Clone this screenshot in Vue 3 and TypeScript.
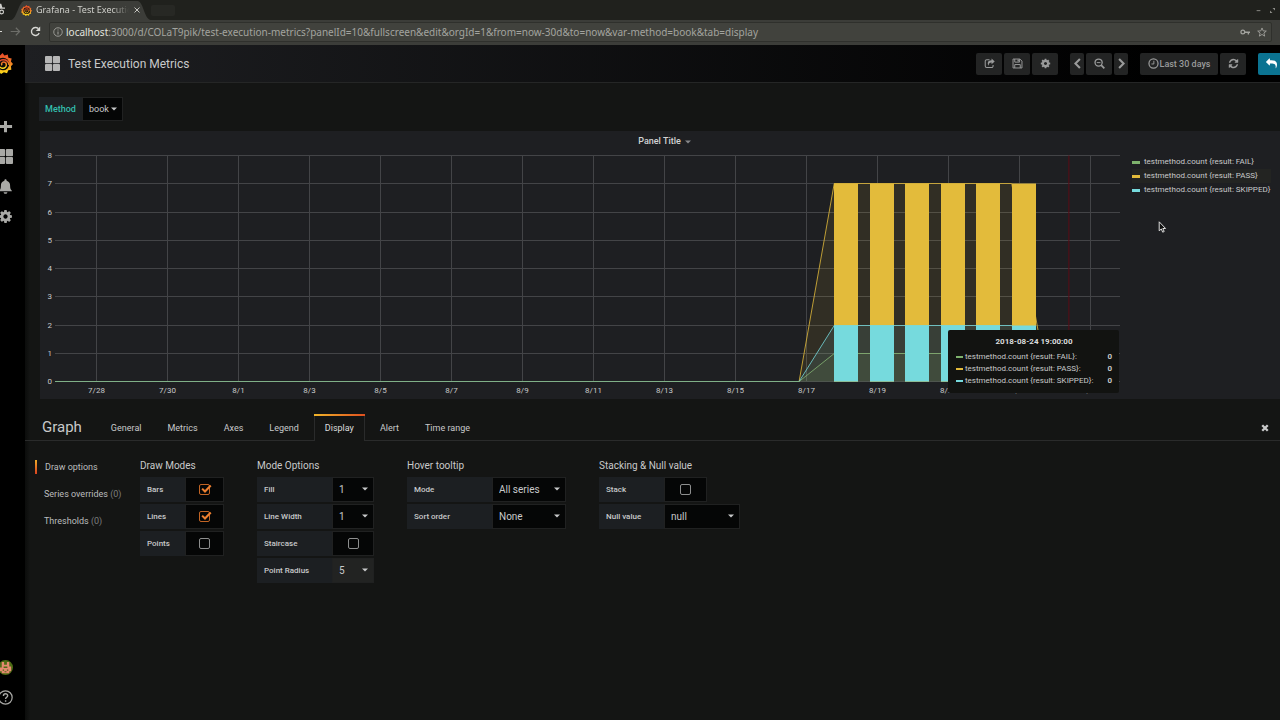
<script setup lang="ts">
import { computed, onBeforeUnmount, onMounted, ref } from 'vue'

interface Series {
  name: string
  color: string
  value: number
}

const series: Series[] = [
  { name: 'testmethod.count {result: FAIL}', color: '#7eb26d', value: 1 },
  { name: 'testmethod.count {result: PASS}', color: '#e3bb3b', value: 7 },
  { name: 'testmethod.count {result: SKIPPED}', color: '#76dadd', value: 2 },
]

const chartEl = ref<HTMLElement | null>(null)
const width = ref(1080)
const left = 15
const top = 5
const plotHeight = 226
const maxY = 8
const days = 30

const x = (day: number): number => left + (day / days) * (width.value - left)
const y = (value: number): number => Math.round(top + plotHeight * (1 - value / maxY)) + 0.5

const dateLabels = ['7/28', '7/30', '8/1', '8/3', '8/5', '8/7', '8/9', '8/11', '8/13', '8/15', '8/17', '8/19', '8/21', '8/23', '8/25']
const xTicks = computed(() =>
  dateLabels.map((label, i) => ({ label, x: Math.round(x(1.15 + i * 2)) + 0.5 })),
)
const yTicks = computed(() => Array.from({ length: maxY + 1 }, (_, v) => ({ label: String(v), y: y(v) })))

const rise = 20.96
const first = 21.95
const shapes = computed(() =>
  series.map((s) => {
    const zero = y(0)
    const v = y(s.value)
    const line = `M${left} ${zero}H${x(rise)}L${x(first)} ${v}H${x(first + 5)}L${x(first + 6)} ${zero}`
    return {
      ...s,
      line,
      area: `${line}Z`,
      bars: [0, 1, 2, 3, 4, 5].map((i) => ({
        x: Math.round(x(first + i)),
        w: Math.round(x(0.67) - x(0)),
        y: v,
        h: zero - v,
      })),
    }
  }),
)

let observer: ResizeObserver | undefined
onMounted(() => {
  if (!chartEl.value) return
  width.value = chartEl.value.clientWidth
  observer = new ResizeObserver(() => {
    if (chartEl.value) width.value = chartEl.value.clientWidth
  })
  observer.observe(chartEl.value)
})
onBeforeUnmount(() => observer?.disconnect())

const tabs = ['General', 'Metrics', 'Axes', 'Legend', 'Display', 'Alert', 'Time range']
const activeTab = ref('Display')
const sections = [
  { label: 'Draw options', count: '' },
  { label: 'Series overrides', count: '(0)' },
  { label: 'Thresholds', count: '(0)' },
]
const activeSection = ref('Draw options')

interface Field {
  id: string
  label: string
  kind: 'check' | 'select'
  checked?: boolean
  value?: string
  lit?: boolean
}
interface Group {
  title: string
  cls: string
  fields: Field[]
}
const groups = ref<Group[]>([
  {
    title: 'Draw Modes',
    cls: 'g-draw',
    fields: [
      { id: 'bars', label: 'Bars', kind: 'check', checked: true },
      { id: 'lines', label: 'Lines', kind: 'check', checked: true },
      { id: 'points', label: 'Points', kind: 'check', checked: false },
    ],
  },
  {
    title: 'Mode Options',
    cls: 'g-mode',
    fields: [
      { id: 'fill', label: 'Fill', kind: 'select', value: '1' },
      { id: 'line-width', label: 'Line Width', kind: 'select', value: '1' },
      { id: 'staircase', label: 'Staircase', kind: 'check', checked: false },
      { id: 'radius', label: 'Point Radius', kind: 'select', value: '5', lit: true },
    ],
  },
  {
    title: 'Hover tooltip',
    cls: 'g-hover',
    fields: [
      { id: 'tip-mode', label: 'Mode', kind: 'select', value: 'All series' },
      { id: 'sort', label: 'Sort order', kind: 'select', value: 'None' },
    ],
  },
  {
    title: 'Stacking & Null value',
    cls: 'g-stack',
    fields: [
      { id: 'stack', label: 'Stack', kind: 'check', checked: false },
      { id: 'null', label: 'Null value', kind: 'select', value: 'null' },
    ],
  },
])
const url = ref('/d/COLaT9pik/test-execution-metrics?panelId=10&fullscreen&edit&orgId=1&from=now-30d&to=now&var-method=book&tab=display')
const method = ref('book')
</script>

<template>
  <div class="page">
    <svg class="sprite" width="0" height="0" aria-hidden="true">
      <defs>
        <linearGradient id="flame" x1="0" y1="0" x2="0" y2="1">
          <stop offset="0" stop-color="#e8442b" />
          <stop offset="0.55" stop-color="#f08a24" />
          <stop offset="1" stop-color="#ffe318" />
        </linearGradient>
      </defs>
      <symbol id="i-grafana" viewBox="0 0 24 24">
        <path fill="url(#flame)" d="M12 0l2.200 2.800 3.800-1 .7 3.500 3.800 1-.9 3.500 2.400 2.700-2.300 2.500.4 4-3.500.7-1.400 3.500-3.600-1.200L10.300 24 8 21.200l-4 .3-.6-3.700L.3 15.600l1.500-3.300L.4 8.800l3.400-1.500.6-3.700 3.800.3z" />
        <circle cx="12.500" cy="12.500" r="7.200" fill="#0b0b0b" />
        <path d="M19.500 13.500C19 9.500 16 7.600 12.700 7.600a5 5 0 0 0-5 5 4.700 4.700 0 0 0 4.700 4.700 4 4 0 0 0 4-4 3.200 3.200 0 0 0-3.200-3.100 2.300 2.300 0 0 0-1.600 3.900" fill="none" stroke="url(#flame)" stroke-width="1.700" />
      </symbol>
      <symbol id="i-grid" viewBox="0 0 16 16">
        <rect width="7.600" height="7.600" rx="1" /><rect x="8.400" width="7.600" height="7.600" rx="1" />
        <rect y="8.400" width="7.600" height="7.600" rx="1" /><rect x="8.400" y="8.400" width="7.600" height="7.600" rx="1" />
      </symbol>
      <symbol id="i-plus" viewBox="0 0 16 16"><path d="M6.400 2h3.200v4.400H15v3.200H9.600V14H6.400V9.600H1V6.400h5.400z" /></symbol>
      <symbol id="i-bell" viewBox="0 0 16 16"><path d="M8 .3c.7 0 1.200.5 1.200 1.200v.4c2.400.6 3.700 2.600 3.700 5.100 0 3 .5 4.200 1.900 5.500v.6H1.200v-.6C2.600 11.200 3.100 10 3.100 7c0-2.500 1.300-4.500 3.700-5.100v-.4C6.800.8 7.300.3 8 .3zM6 14h4c-.1 1.100-.9 1.800-2 1.800S6.100 15.100 6 14z" /></symbol>
      <symbol id="i-cog" viewBox="0 0 1792 1792"><path d="M1152 896q0-106-75-181t-181-75-181 75-75 181 75 181 181 75 181-75 75-181zm512-109v222q0 12-8 23t-20 13l-185 28q-19 54-39 91 35 50 107 138 10 12 10 25t-9 23q-27 37-99 108t-94 71q-12 0-26-9l-138-108q-44 23-91 38-16 136-29 186-7 28-36 28h-222q-14 0-24.500-8.500t-11.500-21.500l-28-184q-49-16-90-37l-141 107q-10 9-25 9-14 0-25-11-126-114-165-168-7-10-7-23 0-12 8-23 15-21 51-66.500t54-70.500q-27-50-41-99l-183-27q-13-2-21-12.500t-8-23.500v-222q0-12 8-23t19-13l186-28q14-46 39-92-40-57-107-138-10-12-10-24 0-10 9-23 26-36 98.500-107.500t94.500-71.500q13 0 26 10l138 107q44-23 91-38 16-136 29-186 7-28 36-28h222q14 0 24.500 8.500t11.500 21.500l28 184q49 16 90 37l142-107q9-9 24-9 13 0 25 10 129 119 165 170 7 8 7 22 0 12-8 23-15 21-51 66.500t-54 70.500q26 50 41 98l183 28q13 2 21 12.500t8 23.500z" /></symbol>
      <symbol id="i-refresh" viewBox="0 0 1792 1792"><path d="M1639 1056q0 5-1 7-64 268-268 434.500t-478 166.500q-146 0-282.500-55t-243.500-157l-129 129q-19 19-45 19t-45-19-19-45v-448q0-26 19-45t45-19h448q26 0 45 19t19 45-19 45l-137 137q71 66 161 102t187 36q134 0 250-65t186-179q11-17 53-117 8-23 30-23h192q13 0 22.500 9.500t9.500 22.500zm25-800v448q0 26-19 45t-45 19h-448q-26 0-45-19t-19-45 19-45l138-138q-148-137-349-137-134 0-250 65t-186 179q-11 17-53 117-8 23-30 23h-199q-13 0-22.500-9.500t-9.500-22.500v-7q65-268 270-434.500t480-166.500q146 0 284 55.500t245 156.500l130-129q19-19 45-19t45 19 19 45z" /></symbol>
      <symbol id="i-reply" viewBox="0 0 1792 1792"><path d="M1792 1120q0 166-127 451-3 7-10.500 24t-13.500 30-13 22q-12 17-28 17-15 0-23.500-10t-8.500-25q0-9 2.500-26.500t2.500-23.500q5-68 5-123 0-101-17.500-181t-48.500-138.500-80-101-105.500-69.500-133-42.500-154-21.500-175.500-6h-224v256q0 26-19 45t-45 19-45-19l-512-512q-19-19-19-45t19-45l512-512q19-19 45-19t45 19 19 45v256h224q713 0 875 403 53 134 53 333z" /></symbol>
      <symbol id="i-share" viewBox="0 0 16 16">
        <path d="M8 2.500H4A2.200 2.200 0 0 0 1.800 4.700v7A2.200 2.200 0 0 0 4 13.900h7a2.200 2.200 0 0 0 2.200-2.200V10" fill="none" stroke="currentColor" stroke-width="1.500" />
        <path d="M11 .8l4.600 4.200L11 9.200V6.700C8.300 6.600 7 7.600 6.800 11.200 4.200 7.500 5.500 3.500 11 3.300z" />
      </symbol>
      <symbol id="i-save" viewBox="0 0 16 16">
        <path d="M1.500 1.500h10l3 3v10h-13zM4 1.500V6h7V1.500M4 14.500v-5h8v5" fill="none" stroke="currentColor" stroke-width="1.400" /><path d="M8 2h2v3H8z" />
      </symbol>
      <symbol id="i-left" viewBox="0 0 16 16"><path d="M11.500 1.500L5 8l6.500 6.500" fill="none" stroke="currentColor" stroke-width="3" /></symbol>
      <symbol id="i-right" viewBox="0 0 16 16"><path d="M4.500 1.500L11 8l-6.500 6.500" fill="none" stroke="currentColor" stroke-width="3" /></symbol>
      <symbol id="i-zoom" viewBox="0 0 16 16"><path d="M10.500 10.500L15 15" stroke="currentColor" stroke-width="2.600" /><circle cx="6.700" cy="6.700" r="5.200" fill="none" stroke="currentColor" stroke-width="1.900" /><path d="M4 6h5.400v1.400H4z" /></symbol>
      <symbol id="i-clock" viewBox="0 0 16 16"><path d="M8.500 4v4.700H5" fill="none" stroke="currentColor" stroke-width="1.400" /><circle cx="8" cy="8" r="6.600" fill="none" stroke="currentColor" stroke-width="1.800" /></symbol>
      <symbol id="i-help" viewBox="0 0 16 16"><circle cx="8" cy="8" r="7.100" fill="none" stroke="currentColor" stroke-width="1.300" /><path d="M5.800 6.300c0-3 4.500-2.900 4.500-.2 0 1.700-2.200 1.700-2.200 3.500M8.100 11v1.500" fill="none" stroke="currentColor" stroke-width="1.500" /></symbol>
      <symbol id="i-reload" viewBox="0 0 16 16"><path d="M13.300 10.200A5.800 5.800 0 1 1 12 3.800" fill="none" stroke="currentColor" stroke-width="2" /><path d="M14.800.8v6.400H8.400z" /></symbol>
      <symbol id="i-arrow" viewBox="0 0 16 16"><path d="M1 8h13M8.500 2.500L14 8l-5.500 5.500" fill="none" stroke="currentColor" stroke-width="1.700" /></symbol>
      <symbol id="i-info" viewBox="0 0 16 16"><circle cx="8" cy="8" r="6.800" fill="none" stroke="currentColor" stroke-width="1.400" /><path d="M7.200 7h1.600v5H7.200zM7.200 4h1.600v1.700H7.200z" /></symbol>
      <symbol id="i-key" viewBox="0 0 16 16"><circle cx="4.500" cy="8" r="3" fill="none" stroke="currentColor" stroke-width="2" /><path d="M7 7h9v2.500h-1.500V12h-2.200V9.500H7z" /></symbol>
      <symbol id="i-star" viewBox="0 0 16 16"><path d="M8 1.500l1.900 4.700 5 .3-3.900 3.200 1.300 4.900L8 11.900l-4.300 2.700L5 9.700 1.100 6.500l5-.3z" fill="none" stroke="currentColor" stroke-width="1.400" /></symbol>
      <symbol id="i-cross" viewBox="0 0 16 16"><path d="M3 3l10 10M13 3L3 13" fill="none" stroke="currentColor" stroke-width="2" /></symbol>
      <symbol id="i-close" viewBox="0 0 16 16"><path d="M2.500 2.500l11 11M13.500 2.500l-11 11" fill="none" stroke="currentColor" stroke-width="4.600" /></symbol>
      <symbol id="i-caret" viewBox="0 0 10 6"><path d="M0 .5h10L5 5.700z" /></symbol>
      <symbol id="i-tick" viewBox="0 0 16 16"><path d="M3.500 7.500l3.800 3.800 7.700-8" fill="none" stroke="currentColor" stroke-width="2.800" /></symbol>
      <symbol id="i-incognito" viewBox="0 0 16 16"><path d="M5 1h6l1.500 5H16v1.500H0V6h3.500z" /><circle cx="4.500" cy="12" r="2.500" fill="none" stroke="currentColor" stroke-width="1.500" /><circle cx="11.500" cy="12" r="2.500" fill="none" stroke="currentColor" stroke-width="1.500" /><path d="M7 11h2v1H7z" /></symbol>
    </svg>

    <div class="tabstrip">
      <svg class="incognito"><use href="#i-incognito" /></svg>
      <div class="browser-tab">
        <svg class="tab-shape" viewBox="0 0 140 20" preserveAspectRatio="none" aria-hidden="true"><path d="M0 20C6 19 7 3 13 1h114c6 2 6 18 13 19z" fill="#3c3d39" /></svg>
        <svg class="favicon"><use href="#i-grafana" /></svg>
        <span class="tab-title">Grafana - Test Execution</span>
        <button class="tab-close" aria-label="Close tab"><svg><use href="#i-cross" /></svg></button>
      </div>
      <div class="new-tab"></div>
      <div class="window-buttons">
        <button aria-label="Minimize"><svg viewBox="0 0 8 8"><path d="M1 3.500h6v1.500H1z" /></svg></button>
        <button aria-label="Restore"><svg viewBox="0 0 8 8"><path d="M4 0h4v4zM0 4l4 4H0z" /></svg></button>
      </div>
    </div>

    <div class="toolbar">
      <button class="tool back" aria-label="Back"><svg viewBox="0 0 4 12"><path d="M0 5h4v2H0z" /></svg></button>
      <button class="tool forward" aria-label="Forward"><svg><use href="#i-arrow" /></svg></button>
      <button class="tool" aria-label="Reload"><svg><use href="#i-reload" /></svg></button>
      <div class="address">
        <svg class="info"><use href="#i-info" /></svg>
        <label class="url" for="url"><b>localhost</b>:3000</label>
        <input id="url" v-model="url" class="url-input" type="text" spellcheck="false" />
        <svg class="key"><use href="#i-key" /></svg>
        <svg class="star"><use href="#i-star" /></svg>
      </div>
    </div>

    <div class="app">
      <nav class="sidebar">
        <a href="#" class="brand" aria-label="Home"><svg><use href="#i-grafana" /></svg></a>
        <a href="#" aria-label="Create"><svg><use href="#i-plus" /></svg></a>
        <a href="#" aria-label="Dashboards"><svg><use href="#i-grid" /></svg></a>
        <a href="#" aria-label="Alerting"><svg><use href="#i-bell" /></svg></a>
        <a href="#" aria-label="Configuration"><svg><use href="#i-cog" /></svg></a>
        <a href="#" class="user" aria-label="Profile">
          <svg viewBox="0 0 16 16">
            <circle cx="8" cy="8" r="8" fill="#4d6b14" />
            <path fill="#e58a70" d="M4 2h2.500v3h3V2H12v5h2v5h-2v2H4v-2H1V8h3z" />
            <path fill="#4d6b14" d="M6 7h4v1.500H6zM5 10h1.500v1.500H5zM9.500 10H11v1.500H9.500zM7 12h2v1H7z" />
          </svg>
        </a>
        <a href="#" aria-label="Help"><svg><use href="#i-help" /></svg></a>
      </nav>

      <main class="content">
        <header class="navbar">
          <h1><svg><use href="#i-grid" /></svg>Test Execution Metrics</h1>
          <div class="nav-group">
            <button class="nb" aria-label="Share"><svg><use href="#i-share" /></svg></button>
            <button class="nb" aria-label="Save"><svg><use href="#i-save" /></svg></button>
            <button class="nb" aria-label="Settings"><svg><use href="#i-cog" /></svg></button>
          </div>
          <div class="nav-group">
            <button class="nb narrow" aria-label="Earlier"><svg><use href="#i-left" /></svg></button>
            <button class="nb" aria-label="Zoom out"><svg><use href="#i-zoom" /></svg></button>
            <button class="nb narrow" aria-label="Later"><svg><use href="#i-right" /></svg></button>
          </div>
          <div class="nav-group">
            <button class="nb time"><svg><use href="#i-clock" /></svg>Last 30 days</button>
            <button class="nb" aria-label="Refresh"><svg><use href="#i-refresh" /></svg></button>
          </div>
          <div class="nav-group">
            <button class="nb return" aria-label="Back to dashboard"><svg><use href="#i-reply" /></svg></button>
          </div>
        </header>

        <div class="variables">
          <label for="method">Method</label>
          <span class="var-wrap">
            <select id="method" v-model="method"><option>book</option></select>
            <svg class="caret"><use href="#i-caret" /></svg>
          </span>
        </div>

        <section class="panel">
          <button class="panel-title">Panel Title<svg class="caret"><use href="#i-caret" /></svg></button>
          <div class="panel-body">
            <div ref="chartEl" class="chart">
              <svg class="plot" role="img" aria-label="Test results per day">
                <g class="grid">
                  <line v-for="t in yTicks" :key="'y' + t.label" :x1="left" :x2="width" :y1="t.y" :y2="t.y" />
                  <line v-for="t in xTicks" :key="'x' + t.label" :x1="t.x" :x2="t.x" :y1="y(8)" :y2="y(0)" />
                </g>
                <g v-for="s in shapes" :key="s.name">
                  <path :d="s.area" :fill="s.color" fill-opacity="0.1" />
                  <path :d="s.line" :stroke="s.color" stroke-opacity="0.8" fill="none" />
                  <rect v-for="b in s.bars" :key="b.x" :x="b.x" :y="b.y" :width="b.w" :height="b.h" :fill="s.color" />
                </g>
                <line class="baseline" :x1="left" :x2="x(rise)" :y1="y(0)" :y2="y(0)" />
                <line class="crosshair" :x1="x(28.56)" :x2="x(28.56)" :y1="y(8)" :y2="y(0)" />
                <g class="axis">
                  <text v-for="t in yTicks" :key="t.label" x="12" :y="t.y + 2" text-anchor="end">{{ t.label }}</text>
                  <text v-for="t in xTicks" :key="t.label" :x="t.x" :y="y(0) + 11" text-anchor="middle">{{ t.label }}</text>
                </g>
              </svg>
              <div class="tooltip">
                <div class="tip-time">2018-08-24 19:00:00</div>
                <div v-for="s in series" :key="s.name" class="tip-row">
                  <i :style="{ background: s.color }"></i><span>{{ s.name }}:</span><b>0</b>
                </div>
              </div>
            </div>
            <div class="legend">
              <button v-for="(s, i) in series" :key="s.name" :class="{ hovered: i === 1 }">
                <i :style="{ background: s.color }"></i>{{ s.name }}
              </button>
              <svg class="pointer" viewBox="0 0 8 12" aria-hidden="true"><path d="M.7.8v9l2.100-1.800 1.400 3.200 1.500-.7-1.400-3h2.800z" fill="#111" stroke="#ddd" /></svg>
            </div>
          </div>
        </section>

        <section class="editor">
          <div class="tabs">
            <h2>Graph</h2>
            <button v-for="t in tabs" :key="t" :class="{ active: t === activeTab }" @click="activeTab = t">{{ t }}</button>
            <button class="close" aria-label="Close editor"><svg><use href="#i-close" /></svg></button>
          </div>
          <div class="editor-body">
            <aside>
              <a v-for="s in sections" :key="s.label" href="#" :class="{ active: s.label === activeSection }" @click.prevent="activeSection = s.label">
                {{ s.label }} <span v-if="s.count">{{ s.count }}</span>
              </a>
            </aside>
            <div v-for="g in groups" :key="g.title" class="group" :class="g.cls">
              <h3>{{ g.title }}</h3>
              <div v-for="f in g.fields" :key="f.id" class="field" :class="f.kind">
                <label :for="f.id">{{ f.label }}</label>
                <div class="control" :class="{ lit: f.lit }">
                  <template v-if="f.kind === 'check'">
                    <span class="box">
                      <input :id="f.id" v-model="f.checked" type="checkbox" />
                      <svg v-if="f.checked"><use href="#i-tick" /></svg>
                    </span>
                  </template>
                  <template v-else>
                    <select :id="f.id" v-model="f.value"><option>{{ f.value }}</option></select>
                    <svg class="caret"><use href="#i-caret" /></svg>
                  </template>
                </div>
              </div>
            </div>
          </div>
        </section>
      </main>
    </div>
  </div>
</template>

<style>
body {
  background: #141514;
}
</style>

<style scoped>
* {
  box-sizing: border-box;
}
.page {
  min-height: 100vh;
  display: flex;
  flex-direction: column;
  overflow: hidden;
  color: #c8c9ca;
  font: 9px/14px Roboto, sans-serif;
}
.sprite {
  position: absolute;
}
button,
select,
input {
  font: inherit;
  color: inherit;
  border: 0;
  margin: 0;
  padding: 0;
  background: none;
  border-radius: 0;
}
svg {
  fill: currentColor;
  display: block;
  flex: none;
}
a {
  color: inherit;
  text-decoration: none;
}

.tabstrip {
  height: 20px;
  display: flex;
  align-items: flex-end;
  background: #20211d;
  font: 9px/14px "Noto Sans", sans-serif;
}
.incognito {
  width: 12px;
  height: 12px;
  margin: 0 0 5px -7px;
  color: #d0d0cc;
}
.browser-tab {
  position: relative;
  width: 140px;
  height: 20px;
  margin-left: 6px;
  padding: 0 10px;
  display: flex;
  align-items: center;
}
.tab-shape {
  position: absolute;
  inset: 0;
  width: 100%;
  height: 100%;
}
.favicon {
  position: relative;
  width: 11px;
  height: 11px;
}
.tab-title {
  position: relative;
  flex: 1;
  margin: 0 4px;
  overflow: hidden;
  white-space: nowrap;
  color: #cfcfca;
  mask-image: linear-gradient(90deg, #000 82%, transparent);
}
.tab-close {
  position: relative;
  color: #c5c5c0;
}
.tab-close svg {
  width: 8px;
  height: 8px;
}
.new-tab {
  width: 24px;
  height: 11px;
  margin: 0 0 4px 0;
  background: #272824;
  border-radius: 2px;
}
.window-buttons {
  margin-left: auto;
  display: flex;
  gap: 9px;
  padding: 0 5px 7px 0;
  color: #8d8d88;
}
.window-buttons svg {
  width: 5px;
  height: 5px;
}

.toolbar {
  height: 25px;
  display: flex;
  align-items: center;
  padding: 0 8px 2px 0;
  background: #3c3d39;
  color: #d8d8d4;
}
.tool {
  width: 20px;
  margin-right: 2px;
}
.tool svg {
  width: 11px;
  height: 11px;
}
.tool.back {
  width: 10px;
  margin-right: 0;
}
.tool.back svg {
  width: 2px;
}
.tool.forward {
  color: #6d6e69;
  width: 18px;
}
.address {
  flex: 1;
  height: 20px;
  display: flex;
  align-items: center;
  padding: 0 4px 0 3px;
  margin-left: -3px;
  border: 1px solid #2f302c;
  border-radius: 2px;
  background: #41423d;
  color: #a3a49f;
  font: 10px/16px "Noto Sans", sans-serif;
}
.address svg {
  width: 10px;
  height: 10px;
}
.address .url {
  margin-left: 3px;
}
.url b {
  font-weight: 400;
  color: #e2e2de;
}
.url-input {
  flex: 1;
  min-width: 0;
}
.address .star {
  margin-left: 7px;
}

.app {
  flex: 1;
  display: flex;
}
.sidebar {
  width: 25px;
  flex: none;
  display: flex;
  flex-direction: column;
  overflow: hidden;
  padding: 7px 0 15px;
  background: #000;
  color: #a9a9a6;
}
.sidebar a {
  height: 30px;
  display: flex;
  align-items: center;
  margin-left: -2px;
}
.sidebar svg {
  width: 15px;
  height: 15px;
}
.sidebar .brand {
  height: 22px;
  margin: 0 0 37px -8px;
}
.sidebar .brand svg {
  width: 21px;
  height: 21px;
}
.sidebar .user {
  margin-top: auto;
}
.sidebar a:last-child {
  height: 16px;
  margin-top: 7px;
}
.content {
  flex: 1;
  min-width: 0;
  display: flex;
  flex-direction: column;
  background: linear-gradient(90deg, #0b0c0b, transparent 5px), #141514;
}
.navbar {
  height: 38px;
  display: flex;
  align-items: center;
  padding-left: 20px;
  background: linear-gradient(90deg, #1e1f22, #000 90%);
  border-bottom: 1px solid #252626;
}
h1,
h2,
h3 {
  margin: 0;
  font-weight: 400;
}
h1 {
  flex: 1;
  display: flex;
  align-items: center;
  gap: 8px;
  font-size: 12px;
  line-height: 18px;
}
h1 svg {
  width: 15px;
  height: 15px;
  color: #b6b6b6;
}
.nav-group {
  display: flex;
  gap: 2px;
  margin-left: 12px;
}
.nb {
  width: 26px;
  height: 22px;
  display: flex;
  align-items: center;
  justify-content: center;
  background: #232424;
  border-radius: 2px;
  color: #9a9b9b;
  font-weight: 500;
}
.nb svg {
  width: 11px;
  height: 11px;
}
.nb.narrow {
  width: 14px;
}
.nb.time {
  width: 78px;
  gap: 1px;
}
.nb.return {
  width: 22px;
  padding-left: 4px;
  background: #0b7391;
  color: #fff;
  border-radius: 2px 0 0 2px;
}

.variables {
  display: flex;
  padding: 14px 0 0 14px;
}
.variables label {
  height: 24px;
  width: 43px;
  line-height: 24px;
  text-align: center;
  background: #1d2023;
  color: #33bfae;
  font-weight: 500;
}
.var-wrap {
  position: relative;
  width: 41px;
  height: 24px;
  background: #050606;
  border: 1px solid #202121;
}
select {
  appearance: none;
  width: 100%;
  height: 100%;
  outline: 0;
}
.var-wrap select {
  padding-left: 6px;
}
.caret {
  width: 6px;
  height: 4px;
}
.var-wrap .caret,
.control .caret {
  position: absolute;
  right: 5px;
  top: 9px;
  pointer-events: none;
}

.panel {
  margin: 10px 0 0 15px;
  height: 268px;
  background: #1e1f22;
}
.panel-title {
  display: flex;
  align-items: center;
  gap: 4px;
  height: 19px;
  margin: 0 auto;
  padding-left: 9px;
  font-weight: 500;
  color: #d2d3d4;
}
.panel-title .caret {
  color: #86878a;
  margin-top: 3px;
}
.panel-body {
  display: flex;
}
.chart {
  position: relative;
  flex: 1;
  min-width: 0;
}
.plot {
  width: 100%;
  height: 248px;
}
.grid line {
  stroke: #434447;
}
.crosshair {
  stroke: #5a0c16;
}
.grid + g + g + g + .baseline,
.baseline {
  stroke: #7fb087;
}
.axis text {
  font-size: 8px;
  fill: #c8c9ca;
}
.tooltip {
  position: absolute;
  right: 1px;
  top: 180px;
  width: 171px;
  padding: 6px 7px 6px 8px;
  border-radius: 2px;
  background: #121311;
  font-size: 8px;
  line-height: 12px;
  white-space: nowrap;
}
.tip-time {
  text-align: center;
  font-weight: 700;
  padding-bottom: 3px;
  color: #dcdddd;
}
.tip-row {
  display: flex;
  align-items: center;
  height: 12px;
}
.tip-row i {
  width: 7px;
  height: 2px;
  margin-right: 2px;
}
.tip-row b {
  margin-left: auto;
}
.legend {
  position: relative;
  width: 160px;
  padding: 5px 9px 0 12px;
  display: flex;
  flex-direction: column;
}
.legend button {
  height: 14px;
  display: flex;
  align-items: center;
  font-size: 8px;
  line-height: 14px;
  white-space: nowrap;
}
.legend .hovered {
  background: #232422;
}
.legend i {
  width: 8px;
  height: 3px;
  margin-right: 4px;
}
.pointer {
  position: absolute;
  left: 38px;
  top: 71px;
  width: 9px;
  height: 12px;
}

.editor {
  flex: 1;
  padding-top: 15px;
}
.tabs {
  display: flex;
  gap: 4px;
  height: 27px;
  padding-left: 17px;
  border-bottom: 1px solid #2a2b2b;
}
h2 {
  font-size: 15px;
  line-height: 26px;
  margin-right: 14px;
}
.tabs button {
  height: 27px;
  padding: 0 10px;
  border: 1px solid transparent;
  border-bottom: 0;
  white-space: nowrap;
}
.tabs .active {
  position: relative;
  border-color: #2a2b2b;
  background: #141514;
  color: #dcdddd;
}
.tabs .active::before {
  content: "";
  position: absolute;
  inset: -1px -1px auto;
  height: 2px;
  background: linear-gradient(90deg, #f0b429, #e0501f);
}
.tabs .close {
  margin-left: auto;
}
.close svg {
  width: 8px;
  height: 8px;
}
.editor-body {
  display: flex;
  align-items: flex-start;
  padding: 17px 0 0 10px;
}
aside {
  width: 105px;
  display: flex;
  flex-direction: column;
  gap: 13px;
  padding-top: 2px;
}
aside a {
  padding-left: 9px;
  white-space: nowrap;
  color: #bcbdbe;
}
aside a span {
  color: #7d7e7f;
}
aside .active {
  padding-left: 8px;
  border-left: 2px solid;
  border-image: linear-gradient(#f0b429, #d8381f) 1;
}
.group {
  margin-right: 33px;
}
h3 {
  font-size: 10px;
  line-height: 16px;
  margin-bottom: 3px;
  white-space: nowrap;
}
.field {
  display: flex;
  height: 25px;
  margin-bottom: 2px;
}
.field label {
  width: 75px;
  padding-left: 7px;
  line-height: 25px;
  background: #1c1f22;
  font-weight: 500;
  font-size: 8px;
}
.control {
  position: relative;
  width: 42px;
  display: flex;
  align-items: center;
  justify-content: center;
  border: 1px solid #202121;
  background: #050606;
  font-size: 10px;
}
.control.lit {
  background: #222322;
}
.control select {
  padding-left: 6px;
}
.g-draw label {
  width: 45px;
}
.g-draw .control {
  width: 39px;
}
.g-hover label {
  width: 85px;
}
.g-hover .control {
  width: 74px;
}
.g-stack label {
  width: 65px;
}
.g-stack .control {
  width: 43px;
}
.g-stack .select .control {
  width: 76px;
}
.box {
  position: relative;
}
.box input {
  appearance: none;
  display: block;
  width: 11px;
  height: 11px;
  border: 1px solid #8d8e8e;
  border-radius: 2px;
}
.box input:checked {
  border-color: #c26424;
}
.box svg {
  position: absolute;
  left: 0;
  top: -1px;
  width: 13px;
  height: 12px;
  color: #ee8030;
  pointer-events: none;
}
</style>
